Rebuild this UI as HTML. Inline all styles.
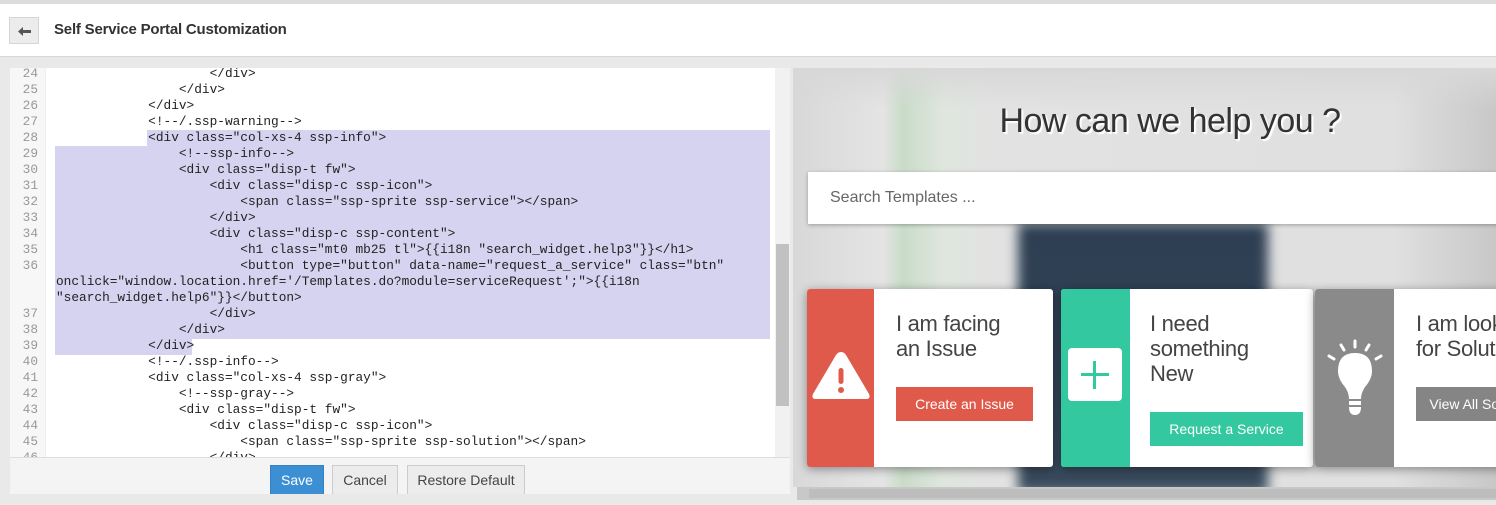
<!DOCTYPE html>
<html><head><style>
*{margin:0;padding:0;box-sizing:border-box}
body{width:1496px;height:505px;overflow:hidden;background:#e9e9e9;font-family:"Liberation Sans",sans-serif;position:relative}
.top{position:absolute;left:0;top:0;width:1496px;height:4px;background:#dcdcdc}
.hdr{position:absolute;left:0;top:4px;width:1496px;height:53px;background:#fff;border-bottom:1px solid #d6d6d6}
.back{position:absolute;left:9px;top:13px;width:30px;height:27px;background:#ececec;border:1px solid #d6d6d6}
.title{position:absolute;left:54px;top:17px;font-size:15px;color:#333;font-weight:bold;letter-spacing:-0.2px}
.ed{position:absolute;left:10px;top:68px;width:780px;height:426px;background:#fff;overflow:hidden}
.gut{position:absolute;left:0;top:0;width:36px;height:389px;background:#f7f7f7;border-right:1px solid #eee}
.code{position:absolute;left:0;top:0;width:765px;height:389px;overflow:hidden}
.ln{position:absolute;left:0;width:28px;text-align:right;font:12.8px/16px "Liberation Mono",monospace;color:#999}
.tx{position:absolute;left:46px;font:12.8px/16px "Liberation Mono",monospace;color:#222;white-space:pre}
.hl{position:absolute;background:#d5d3ef}
.vs{position:absolute;left:765px;top:0;width:15px;height:389px;background:#f1f1f1}
.bar{position:absolute;left:0;top:389px;width:780px;height:37px;background:#f4f4f4;border-top:1px solid #ddd}
.btn{position:absolute;top:7px;height:30px;font-size:14px;line-height:28px;text-align:center;border:1px solid #ccc;background:#ececec;color:#444}
.rp{position:absolute;left:793px;top:68px;width:703px;height:419px;overflow:hidden;background:linear-gradient(90deg,#d8d8d8 0,#e4e4e4 90px,#c9dcc8 110px,#dfe6de 150px,#e2e2e2 200px,#e0e0e0 600px,#c8c8c8 703px)}
.dark{position:absolute;left:225px;top:155px;width:250px;height:270px;background:linear-gradient(#2d3e52,#384a5c);filter:blur(6px)}
.h1{position:absolute;left:12px;width:730px;top:34px;text-align:center;font-size:34px;color:#333;letter-spacing:-0.5px;text-shadow:1px 1px 0 #fff,2px 2px 1px #fff}
.search{position:absolute;left:15px;top:104px;width:700px;height:52px;background:#fff;box-shadow:0 1px 4px rgba(0,0,0,.3);font-size:16px;color:#666;padding:17px 22px}
.card{position:absolute;top:221px;height:178px;background:#fff;border-radius:3px;overflow:hidden;box-shadow:0 2px 10px rgba(0,0,0,.4)}
.strip{position:absolute;left:0;top:0;height:178px}
.ct{position:absolute;font-size:22px;line-height:25px;color:#444;letter-spacing:-0.3px}
.cb{position:absolute;height:34px;color:#fff;font-size:14px;line-height:34px;text-align:center}
.hs{position:absolute;left:797px;top:487px;width:699px;height:13px;background:#c8c8c8}
</style></head><body>
<div class="top"></div>
<div class="hdr">
<div class="back"><svg width="30" height="27" viewBox="0 0 30 27"><path d="M8 13.5 L13 9 L13 12 L21 12 L21 15 L13 15 L13 18 Z" fill="#555"/></svg></div>
<div class="title">Self Service Portal Customization</div>
</div>
<div class="ed">
<div class="gut"></div>
<div class="code">
<div class="hl" style="left:137px;top:62px;width:623px;height:16px"></div>
<div class="hl" style="left:45px;top:78px;width:715px;height:193px"></div>
<div class="hl" style="left:45px;top:271px;width:137px;height:16px"></div>
<div class="ln" style="top:-2px">24</div><div class="tx" style="top:-2px">                    &lt;/div&gt;</div>
<div class="ln" style="top:14px">25</div><div class="tx" style="top:14px">                &lt;/div&gt;</div>
<div class="ln" style="top:30px">26</div><div class="tx" style="top:30px">            &lt;/div&gt;</div>
<div class="ln" style="top:46px">27</div><div class="tx" style="top:46px">            &lt;!--/.ssp-warning--&gt;</div>
<div class="ln" style="top:62px">28</div><div class="tx" style="top:62px">            &lt;div class="col-xs-4 ssp-info"&gt;</div>
<div class="ln" style="top:78px">29</div><div class="tx" style="top:78px">                &lt;!--ssp-info--&gt;</div>
<div class="ln" style="top:94px">30</div><div class="tx" style="top:94px">                &lt;div class="disp-t fw"&gt;</div>
<div class="ln" style="top:110px">31</div><div class="tx" style="top:110px">                    &lt;div class="disp-c ssp-icon"&gt;</div>
<div class="ln" style="top:126px">32</div><div class="tx" style="top:126px">                        &lt;span class="ssp-sprite ssp-service"&gt;&lt;/span&gt;</div>
<div class="ln" style="top:142px">33</div><div class="tx" style="top:142px">                    &lt;/div&gt;</div>
<div class="ln" style="top:158px">34</div><div class="tx" style="top:158px">                    &lt;div class="disp-c ssp-content"&gt;</div>
<div class="ln" style="top:174px">35</div><div class="tx" style="top:174px">                        &lt;h1 class="mt0 mb25 tl"&gt;{{i18n "search_widget.help3"}}&lt;/h1&gt;</div>
<div class="ln" style="top:190px">36</div><div class="tx" style="top:190px">                        &lt;button type="button" data-name="request_a_service" class="btn"</div>
<div class="tx" style="top:206px">onclick="window.location.href='/Templates.do?module=serviceRequest';"&gt;{{i18n</div>
<div class="tx" style="top:222px">"search_widget.help6"}}&lt;/button&gt;</div>
<div class="ln" style="top:238px">37</div><div class="tx" style="top:238px">                    &lt;/div&gt;</div>
<div class="ln" style="top:254px">38</div><div class="tx" style="top:254px">                &lt;/div&gt;</div>
<div class="ln" style="top:270px">39</div><div class="tx" style="top:270px">            &lt;/div&gt;</div>
<div class="ln" style="top:286px">40</div><div class="tx" style="top:286px">            &lt;!--/.ssp-info--&gt;</div>
<div class="ln" style="top:302px">41</div><div class="tx" style="top:302px">            &lt;div class="col-xs-4 ssp-gray"&gt;</div>
<div class="ln" style="top:318px">42</div><div class="tx" style="top:318px">                &lt;!--ssp-gray--&gt;</div>
<div class="ln" style="top:334px">43</div><div class="tx" style="top:334px">                &lt;div class="disp-t fw"&gt;</div>
<div class="ln" style="top:350px">44</div><div class="tx" style="top:350px">                    &lt;div class="disp-c ssp-icon"&gt;</div>
<div class="ln" style="top:366px">45</div><div class="tx" style="top:366px">                        &lt;span class="ssp-sprite ssp-solution"&gt;&lt;/span&gt;</div>
<div class="ln" style="top:382px">46</div><div class="tx" style="top:382px">                    &lt;/div&gt;</div>
</div>
<div class="vs"><div style="position:absolute;left:1px;top:176px;width:13px;height:162px;background:#c1c1c1"></div></div>
<div class="bar">
<div class="btn" style="left:260px;width:54px;background:#3d8fd3;border-color:#3580c0;color:#fff">Save</div>
<div class="btn" style="left:322px;width:66px">Cancel</div>
<div class="btn" style="left:397px;width:118px">Restore Default</div>
</div>
</div>
<div class="rp">
<div class="dark"></div>
<div style="position:absolute;left:0;top:0;width:703px;height:40px;background:linear-gradient(#d8d8d8,rgba(230,230,230,0))"></div>
<div class="h1">How can we help you ?</div>
<div class="search">Search Templates ...</div>
<div class="card" style="left:14px;width:246px">
<div class="strip" style="width:67px;background:#e05a4b"></div>
<svg style="position:absolute;left:2px;top:57px" width="64" height="60" viewBox="0 0 64 60"><path d="M32 6 Q35 6 37 9 L60 48 Q62 53 57 53 L7 53 Q2 53 4 48 L27 9 Q29 6 32 6Z" fill="#fff"/><rect x="29.5" y="22" width="5" height="16" rx="2.5" fill="#e05a4b"/><circle cx="32" cy="44" r="3" fill="#e05a4b"/></svg>
<div class="ct" style="left:89px;top:22px">I am facing<br>an Issue</div>
<div class="cb" style="left:89px;top:98px;width:137px;background:#e05a4b">Create an Issue</div>
</div>
<div class="card" style="left:268px;width:252px">
<div class="strip" style="width:69px;background:#33c8a0"></div>
<div style="position:absolute;left:7px;top:59px;width:54px;height:53px;background:#fff;border-radius:4px"></div>
<div style="position:absolute;left:32px;top:72px;width:3px;height:28px;background:#33c8a0"></div>
<div style="position:absolute;left:20px;top:84px;width:28px;height:3px;background:#33c8a0"></div>
<div class="ct" style="left:89px;top:22px">I need<br>something<br>New</div>
<div class="cb" style="left:89px;top:123px;width:153px;background:#33c8a0">Request a Service</div>
</div>
<div class="card" style="left:522px;width:200px;border-radius:3px 0 0 3px">
<div class="strip" style="width:79px;background:#8a8a8a"></div>
<svg style="position:absolute;left:4px;top:50px" width="72" height="80" viewBox="0 0 72 80"><path d="M36 14 Q53 14 53 32 Q53 40 46 48 Q42 54 42 60 L30 60 Q30 54 26 48 Q19 40 19 32 Q19 14 36 14Z" fill="#fff"/><rect x="30" y="62" width="12" height="4" fill="#fff"/><path d="M30 68 H42 Q42 76 36 76 Q30 76 30 68Z" fill="#fff"/><g stroke="#fff" stroke-width="3" stroke-linecap="round"><line x1="36" y1="2" x2="36" y2="8"/><line x1="22" y1="6" x2="25" y2="11"/><line x1="50" y1="6" x2="47" y2="11"/><line x1="10" y1="17" x2="15" y2="20"/><line x1="62" y1="17" x2="57" y2="20"/></g></svg>
<div class="ct" style="left:101px;top:22px;white-space:nowrap">I am looking<br>for Solutions</div>
<div class="cb" style="left:101px;top:98px;width:137px;background:#858585">View All Solutions</div>
</div>
</div>
<div class="hs"><div style="position:absolute;left:12px;top:2px;width:690px;height:9px;background:#bdbdbd"></div></div>
</body></html>
